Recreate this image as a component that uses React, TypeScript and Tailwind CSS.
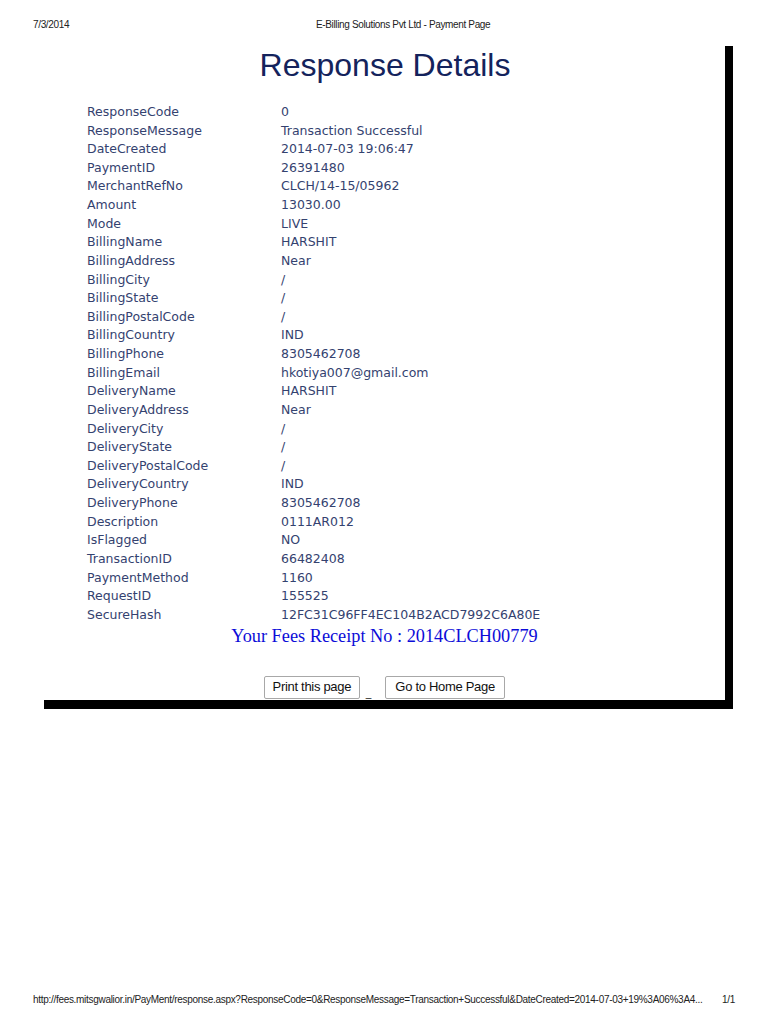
import React from 'react';

const rows: [string, string][] = [
  ['ResponseCode', '0'],
  ['ResponseMessage', 'Transaction Successful'],
  ['DateCreated', '2014-07-03 19:06:47'],
  ['PaymentID', '26391480'],
  ['MerchantRefNo', 'CLCH/14-15/05962'],
  ['Amount', '13030.00'],
  ['Mode', 'LIVE'],
  ['BillingName', 'HARSHIT'],
  ['BillingAddress', 'Near'],
  ['BillingCity', '/'],
  ['BillingState', '/'],
  ['BillingPostalCode', '/'],
  ['BillingCountry', 'IND'],
  ['BillingPhone', '8305462708'],
  ['BillingEmail', 'hkotiya007@gmail.com'],
  ['DeliveryName', 'HARSHIT'],
  ['DeliveryAddress', 'Near'],
  ['DeliveryCity', '/'],
  ['DeliveryState', '/'],
  ['DeliveryPostalCode', '/'],
  ['DeliveryCountry', 'IND'],
  ['DeliveryPhone', '8305462708'],
  ['Description', '0111AR012'],
  ['IsFlagged', 'NO'],
  ['TransactionID', '66482408'],
  ['PaymentMethod', '1160'],
  ['RequestID', '155525'],
  ['SecureHash', '12FC31C96FF4EC104B2ACD7992C6A80E'],
];

export default function App() {
  return (
    <div className="w-[768px] h-[1024px] bg-white flex flex-col relative overflow-hidden" style={{ fontFamily: '"Liberation Sans", Arial, sans-serif' }}>
      {/* print header */}
      <div className="h-[37px] flex items-start pt-[19px] px-[33px] text-[10px] leading-[12px] text-[#222] tracking-[-0.35px]">
        <span className="w-[283px]">7/3/2014</span>
        <span>E-Billing Solutions Pvt Ltd - Payment Page</span>
      </div>

      {/* main box */}
      <div className="ml-[36px] w-[689px] h-[663px] bg-white shadow-[8px_9px_0_#000] flex flex-col">
        <h1 className="text-center text-[32px] leading-[36px] text-[#14235c] mt-[10px] pl-[9px]">Response Details</h1>

        <div className="mt-[20px] flex flex-col pl-[51px] text-[12.5px] text-[#34426f]" style={{ fontFamily: '"DejaVu Sans", Verdana, sans-serif' }}>
          {rows.map(([k, v]) => (
            <div key={k} className="flex h-[18.63px] items-center">
              <span className="w-[194px]">{k}</span>
              <span>{v}</span>
            </div>
          ))}
        </div>

        <div className="text-center text-[18.3px] leading-[22px] text-[#0c0cd8] pl-[8px]" style={{ fontFamily: '"Liberation Serif", "Times New Roman", serif' }}>
          Your Fees Receipt No : 2014CLCH00779
        </div>

        <div className="flex items-end justify-center mt-[29px] pl-[8px] text-[13px] text-[#111] tracking-[-0.3px]">
          <button className="h-[23px] w-[96px] border border-[#a8a8a8] rounded-[2px] bg-white">Print this page</button>
          <span className="ml-[6px] mr-[14px] text-[10px] leading-[10px]">_</span>
          <button className="h-[23px] w-[120px] border border-[#a8a8a8] rounded-[2px] bg-white">Go to Home Page</button>
        </div>
      </div>

      <div className="flex-1" />

      {/* print footer */}
      <div className="h-[30px] flex items-start px-[33px] text-[10px] leading-[12px] text-[#222] tracking-[-0.3px]">
        <span className="flex-1 whitespace-nowrap overflow-hidden">http://fees.mitsgwalior.in/PayMent/response.aspx?ResponseCode=0&amp;ResponseMessage=Transaction+Successful&amp;DateCreated=2014-07-03+19%3A06%3A4...</span>
        <span className="ml-[10px]">1/1</span>
      </div>
    </div>
  );
}
